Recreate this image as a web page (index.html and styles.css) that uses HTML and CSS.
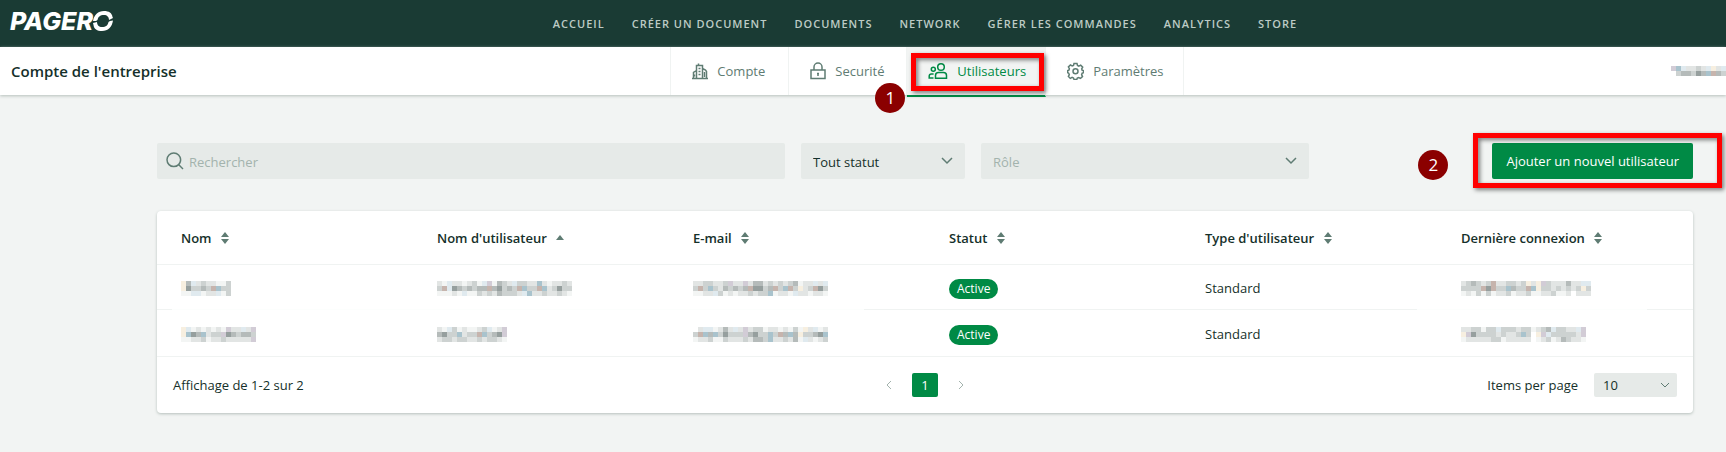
FILE: index.html
```html
<!DOCTYPE html>
<html lang="fr">

<head>
  <meta charset="utf-8">
  <title>Compte de l'entreprise</title>
  <link rel="stylesheet" href="styles.css">
</head>

<body>
  <header class="topbar">
    <a class="logo" href="#" aria-label="Pagero"><span>PAGER</span><svg width="20" height="20" viewBox="0 0 20 20">
        <path d="M0 10C1 4 5 0 11 0c5 0 8 2 8.500 6l.5 1-4 2c0-3-2-5-5-5-4 0-6 2-6.500 5l-1.500 1z" fill="#fff" />
        <path d="M20 9.500C19 16 15 20 9 20c-5 0-8-2-8.500-6L0 12l4-1c0 3 2 5 5 5 4 0 6-2 6.500-5l1.500-1z" fill="#fff" />
      </svg></a>
    <nav class="main-nav">
      <a href="#">ACCUEIL</a>
      <a href="#">CRÉER UN DOCUMENT</a>
      <a href="#">DOCUMENTS</a>
      <a href="#">NETWORK</a>
      <a href="#">GÉRER LES COMMANDES</a>
      <a href="#">ANALYTICS</a>
      <a href="#">STORE</a>
    </nav>
  </header>

  <div class="subbar">
    <h1 class="page-title">Compte de l'entreprise</h1>
    <nav class="tabs">
      <a class="tab" href="#">
        <svg class="icon" width="16" height="18" viewBox="0 0 16 18">
          <path d="M4.500 16.500V3.500h2v-2h0v2h4v13zM4.500 8.500l-3 2v6h3M10.500 6.500l3 1.500 1 1.500v7h-4M0 16.500h16" />
          <path d="M6.500 6.500h2M6.500 9.500h2M6.500 12.500h2M2.500 12.500v2M12.500 10v5" />
        </svg>
        Compte
      </a>
      <a class="tab" href="#">
        <svg class="icon" width="16" height="18" viewBox="0 0 16 18">
          <path d="M1 8h14v8.500H1zM4 8V5a4 4 0 0 1 8 0v3M8 11v3" />
          <path d="M7 11.500h2" />
        </svg>
        Securité
      </a>
      <div class="tab-wrap">
        <a class="tab active" href="#">
          <svg class="icon" width="20" height="18" viewBox="0 0 20 18">
            <circle cx="13" cy="5" r="3.300" />
            <path d="M7.500 16.300v-2.800q0-3 3-3h5q3 0 3 3v2.800z" />
            <circle cx="5.300" cy="7.300" r="2" />
            <path d="M5.500 16H1.200v-1.800q0-2.200 2.200-2.200h2.200" />
          </svg>
          Utilisateurs
        </a>
        <span class="mark mark-tab"></span>
        <span class="step step-tab">1</span>
      </div>
      <a class="tab" href="#">
        <svg class="icon" width="17" height="18" viewBox="0 0 17 18">
          <path d="M7 1.500h3l.5 2 1.300.6 1.900-1 2 2-1 1.800.5 1.400 1.500.5v1.800l-1.500.6-.6 1.500.9 1.800-2 1.900-1.800-.9-1.400.6-.5 1.400H7l-.5-1.500-1.400-.6-1.800 1-1.900-2 .9-1.700-.6-1.500-1-.5V8.500l1.200-.4.5-1.400-1-1.800 2-1.900 1.800 1 1.300-.6z" />
          <circle cx="8.500" cy="9.300" r="2.500" />
        </svg>
        Paramètres
      </a>
    </nav>
    <div class="account"><span class="mosaic" data-name="account"></span></div>
  </div>

  <main class="content">
    <div class="toolbar">
      <div class="filters">
        <label class="search">
          <svg class="icon" width="18" height="18" viewBox="0 0 18 18">
            <circle cx="7.800" cy="7.800" r="6.800" />
            <path d="M12.800 12.800l4.200 4.200" />
          </svg>
          <input type="text" placeholder="Rechercher" aria-label="Rechercher">
        </label>
        <div class="select status">
          <select aria-label="Statut">
            <option>Tout statut</option>
          </select>
          <svg class="icon" width="12" height="8" viewBox="0 0 12 8"><path d="M1 1l5 5 5-5" /></svg>
        </div>
        <div class="select role">
          <select aria-label="Rôle">
            <option>Rôle</option>
          </select>
          <svg class="icon" width="12" height="8" viewBox="0 0 12 8"><path d="M1 1l5 5 5-5" /></svg>
        </div>
      </div>
      <div class="add">
        <button class="btn" type="button">Ajouter un nouvel utilisateur</button>
        <span class="mark mark-add"></span>
        <span class="step step-add">2</span>
      </div>
    </div>

    <section class="card">
      <table class="users">
        <thead>
          <tr>
            <th>Nom <svg class="sort" width="8" height="12" viewBox="0 0 8 12"><path d="M0 5l4-5 4 5zM0 7h8l-4 5z" /></svg></th>
            <th>Nom d'utilisateur <svg class="sort" width="8" height="12" viewBox="0 0 8 12"><path d="M0 8l4-5 4 5z" /></svg></th>
            <th>E-mail <svg class="sort" width="8" height="12" viewBox="0 0 8 12"><path d="M0 5l4-5 4 5zM0 7h8l-4 5z" /></svg></th>
            <th>Statut <svg class="sort" width="8" height="12" viewBox="0 0 8 12"><path d="M0 5l4-5 4 5zM0 7h8l-4 5z" /></svg></th>
            <th>Type d'utilisateur <svg class="sort" width="8" height="12" viewBox="0 0 8 12"><path d="M0 5l4-5 4 5zM0 7h8l-4 5z" /></svg></th>
            <th>Dernière connexion <svg class="sort" width="8" height="12" viewBox="0 0 8 12"><path d="M0 5l4-5 4 5zM0 7h8l-4 5z" /></svg></th>
          </tr>
        </thead>
        <tbody>
          <tr class="faded">
            <td><span class="mosaic" data-name="name1"></span></td>
            <td><span class="mosaic" data-name="login1"></span></td>
            <td><span class="mosaic" data-name="mail1"></span></td>
            <td><span class="badge">Active</span></td>
            <td>Standard</td>
            <td><span class="mosaic" data-name="date1"></span></td>
          </tr>
          <tr>
            <td><span class="mosaic" data-name="name2"></span></td>
            <td><span class="mosaic" data-name="login2"></span></td>
            <td><span class="mosaic" data-name="mail2"></span></td>
            <td><span class="badge">Active</span></td>
            <td>Standard</td>
            <td><span class="mosaic" data-name="date2"></span></td>
          </tr>
        </tbody>
      </table>
      <footer class="card-footer">
        <span>Affichage de 1-2 sur 2</span>
        <div class="pager">
          <button type="button" aria-label="Page précédente"><svg width="6" height="10" viewBox="0 0 6 10"><path d="M5 1L1 5l4 4" /></svg></button>
          <button type="button" class="current">1</button>
          <button type="button" aria-label="Page suivante"><svg width="6" height="10" viewBox="0 0 6 10"><path d="M1 1l4 4-4 4" /></svg></button>
        </div>
        <div class="per-page">
          <label for="perPage">Items per page</label>
          <div class="select small">
            <select id="perPage">
              <option>10</option>
            </select>
            <svg class="icon" width="10" height="7" viewBox="0 0 10 7"><path d="M1 1l4 4 4-4" /></svg>
          </div>
        </div>
      </footer>
    </section>
  </main>
  <script src="mosaic.js"></script>
</body>

</html>
```
FILE: styles.css
```css
* {
  box-sizing: border-box;
}

body {
  margin: 0;
  background-color: #f2f4f3;
  color: #15302a;
  font-family: "Open Sans", "Noto Sans", sans-serif;
  font-size: 13px;
  line-height: 20px;
}

a {
  color: inherit;
  text-decoration: none;
}

button,
input,
select {
  font: inherit;
  color: inherit;
  border: 0;
  margin: 0;
}

.icon {
  flex: none;
  fill: none;
  stroke: #5f7c73;
  stroke-width: 1.5;
}

/* top bar */
.topbar {
  display: grid;
  grid-template-columns: 553fr auto 429fr;
  align-items: center;
  height: 47px;
  background-color: #1a3b34;
}

.logo {
  display: flex;
  align-items: center;
  padding: 0 0 5px 10px;
  color: #fff;
  font-family: Inter, sans-serif;
  font-size: 25px;
  font-style: italic;
  font-weight: 800;
  line-height: 20px;
}

.main-nav {
  display: flex;
  gap: 27px;
  color: #bdcbc5;
  font-size: 11px;
  font-weight: 600;
  letter-spacing: 1px;
  white-space: nowrap;
}

/* sub bar */
.subbar {
  display: grid;
  grid-template-columns: 671fr auto 543fr;
  align-items: center;
  height: 48px;
  background-color: #fff;
  box-shadow: 0 1px 3px #b5bfbb;
}

.page-title {
  margin: 0;
  padding-left: 11px;
  font-size: 15px;
  font-weight: 600;
}

.tabs {
  display: flex;
  height: 48px;
  border-left: 1px solid #f0f3f2;
  color: #5f7c73;
}

.tab {
  display: flex;
  align-items: center;
  gap: 9px;
  min-width: 118px;
  height: 48px;
  padding: 0 19px 0 21px;
  border-right: 1px solid #f0f3f2;
}

.tab-wrap {
  position: relative;
}

.active {
  height: 50px;
  border-bottom: 2px solid #008a45;
  background-color: #f2f4f3;
  color: #008a45;
}

.active .icon {
  stroke: #008a45;
}

.account {
  display: flex;
  justify-content: flex-end;
  overflow: hidden;
}

/* red frames and numbered steps over the page */
.mark {
  position: absolute;
  border: 5px solid #f00;
  filter: drop-shadow(2px 2px 2px rgba(0, 0, 0, 0.5));
  pointer-events: none;
}

.mark-tab {
  inset: 6px 2px 4px 4px;
}

.mark-add {
  inset: -10px -29px -9px -19px;
}

.step {
  position: absolute;
  width: 30px;
  height: 30px;
  border-radius: 50%;
  background-color: #8b0000;
  color: #fff;
  font-size: 17px;
  line-height: 30px;
  text-align: center;
}

.step-tab {
  top: 36px;
  left: -32px;
}

.step-add {
  top: 7px;
  left: -74px;
}

/* filters */
.content {
  padding: 48px 33px 39px 157px;
}

.toolbar {
  display: flex;
  justify-content: space-between;
  margin-bottom: 32px;
}

.filters {
  display: flex;
  gap: 16px;
  width: 75%;
}

.search {
  display: flex;
  flex: 1;
  align-items: center;
  gap: 5px;
  height: 36px;
  padding: 0 9px;
  border-radius: 2px;
  background-color: #e6eae8;
}

.search input {
  flex: 1;
  padding: 2px 0 0;
  background: none;
}

.search input::placeholder {
  color: #a3b3ad;
}

.select {
  display: grid;
  align-items: center;
  height: 36px;
  border-radius: 2px;
  background-color: #e6eae8;
}

.select select,
.select .icon {
  grid-area: 1 / 1;
}

.select select {
  width: 100%;
  height: 100%;
  padding: 2px 12px 0;
  background: none;
  appearance: none;
}

.select .icon {
  justify-self: end;
  margin-right: 12px;
  pointer-events: none;
}

.status {
  width: 164px;
}

.role {
  width: 328px;
}

.role select {
  color: #a3b3ad;
}

.add {
  position: relative;
}

.btn {
  height: 36px;
  padding: 0 14px;
  border-radius: 2px;
  background-color: #008a45;
  color: #fff;
}

/* table */
.card {
  border-radius: 4px;
  background-color: #fff;
  box-shadow: 0 1px 3px #b5bfbb;
}

.users {
  width: 100%;
  border-collapse: collapse;
  table-layout: fixed;
}

.users th,
.users td {
  height: 46px;
  padding: 2px 0 0 24px;
  border-bottom: 1px solid #f0f3f2;
  text-align: left;
}

.users th {
  height: 53px;
  font-weight: 600;
}

/* the rule under this row breaks off beneath the hidden values */
.users .faded td {
  border-bottom-color: transparent;
}

.users .faded {
  background: linear-gradient(to right, #f0f3f2 1%, #fcfefd 1% 46%, #f0f3f2 46% 82%, #fcfefd 82% 97%, #f0f3f2 97%) bottom / 100% 1px no-repeat;
}

.sort {
  margin-left: 6px;
  vertical-align: -1px;
  fill: #5f7c73;
}

.badge {
  display: inline-block;
  height: 20px;
  padding: 0 8px;
  border-radius: 10px;
  background-color: #008a45;
  color: #fff;
  font-size: 12px;
}

.mosaic svg {
  display: block;
}

.card-footer {
  display: grid;
  grid-template-columns: 1fr auto 1fr;
  align-items: center;
  height: 56px;
  padding: 1px 16px 0;
}

.pager {
  display: flex;
  gap: 10px;
}

.pager button {
  width: 26px;
  height: 24px;
  padding: 0;
  border-radius: 2px;
  background: none;
}

.pager svg {
  fill: none;
  stroke: #a3b3ad;
}

.pager .current {
  background-color: #008a45;
  color: #fff;
}

.per-page {
  display: flex;
  align-items: center;
  justify-content: flex-end;
  gap: 16px;
}

.small {
  width: 83px;
  height: 24px;
}

.small select {
  padding: 0 9px;
}

.small .icon {
  margin-right: 7px;
  stroke-width: 1;
}
```
FILE: mosaic.js
```js
// Private values are drawn as a mosaic of 5px cells, one letter per cell.
const COLORS = {
  '.': '#ffffff',
  a: '#f3f5f4',
  b: '#e2e5e4',
  c: '#cdd2d1',
  d: '#b5bbba',
  e: '#969f9e',
  r: '#c6b4ad',
  y: '#f7efe0',
  u: '#a9c3cd',
  v: '#e0eaef',
  p: '#d2ccd6'
};

const MOSAICS = {
  account: ['puvbbcbvybv', '.cddcedurdc'],
  name1: ['ydvbcbbaac', 'yeccdcrucc', 'aavvabbvac'],
  name2: ['yvabababapbbvbp', 'yuedubccpedcddc', 'aabbcabbcbbbbbp'],
  login1: ['bavbbabcavpadcbvccbbubabbcb', 'crvedcdcddrdecdcruccrubceco', 'aaabavaacbcbdcccbvubbcbbcba'],
  login2: ['bavcabaabcvabp', 'deccubccrucdep', 'bccbccbbcbccba'],
  mail1: ['bbccbbcpbbpbddbcbcbcdabbvbv', 'crcucbdcdcdreecdrcurcybcrec', 'aabbvcababbcbccuabbavbbabba'],
  mail2: ['.bvvabdbvbpbccabbabacaybvab', 'cruducecccpdeccucrdudyccdeu', 'abbcaacbbbcbddcubbcbdavbabc'],
  date1: ['bcdcbcrbbccbcybypcbbbdbbvv', 'ccccrerccudccruyccbcbcbcyc', 'abacacabbcabbcaabbcaab.bbb'],
  date2: ['bbccaccvcccbccabcdvccbbvp', 'ypeccccbcbbcuc.ypvcccccbp', 'abbbbbccabbbbb.abcabdcbba']
};

document.querySelectorAll('.mosaic').forEach((el) => {
  const rows = MOSAICS[el.dataset.name];
  const width = rows[0].length * 5;
  const height = rows.length * 5;
  let rects = '';
  rows.forEach((row, y) => {
    [...row].forEach((cell, x) => {
      rects += `<rect x="${x * 5}" y="${y * 5}" width="5" height="5" fill="${COLORS[cell] || COLORS.c}"/>`;
    });
  });
  el.innerHTML = `<svg width="${width}" height="${height}" shape-rendering="crispEdges" aria-hidden="true">${rects}</svg>`;
});
```
